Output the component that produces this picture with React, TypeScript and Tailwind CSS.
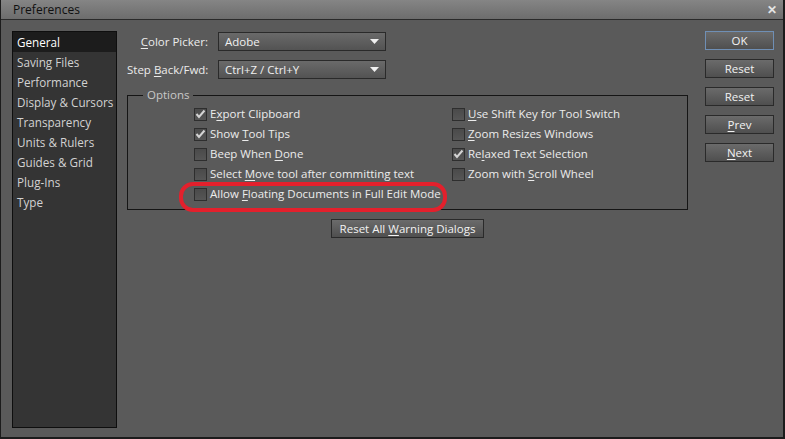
import React from "react";

const FONT = { fontFamily: '"Open Sans", "Noto Sans", "Liberation Sans", sans-serif' };

const CATEGORIES = [
  "General",
  "Saving Files",
  "Performance",
  "Display & Cursors",
  "Transparency",
  "Units & Rulers",
  "Guides & Grid",
  "Plug-Ins",
  "Type",
];

type Opt = { pre: string; key: string; post: string; checked: boolean };

const LEFT_OPTS: Opt[] = [
  { pre: "E", key: "x", post: "port Clipboard", checked: true },
  { pre: "Show ", key: "T", post: "ool Tips", checked: true },
  { pre: "Beep When ", key: "D", post: "one", checked: false },
  { pre: "Select ", key: "M", post: "ove tool after committing text", checked: false },
  { pre: "Allow ", key: "F", post: "loating Documents in Full Edit Mode", checked: false },
];

const RIGHT_OPTS: Opt[] = [
  { pre: "", key: "U", post: "se Shift Key for Tool Switch", checked: false },
  { pre: "", key: "Z", post: "oom Resizes Windows", checked: false },
  { pre: "Re", key: "l", post: "axed Text Selection", checked: true },
  { pre: "Zoom with ", key: "S", post: "croll Wheel", checked: false },
];

function Checkbox({ checked }: { checked: boolean }) {
  return (
    <div className="w-[13px] h-[13px] border border-[#2e2e2e] bg-gradient-to-b from-[#4a4a4a] to-[#565656] flex items-center justify-center shrink-0">
      {checked && (
        <svg width="11" height="10" viewBox="0 0 11 10">
          <path d="M1.5 5 L4 8 L9.5 1.5" fill="none" stroke="#d4d4d4" strokeWidth="2" />
        </svg>
      )}
    </div>
  );
}

function OptionRow({ opt }: { opt: Opt }) {
  return (
    <div className="h-5 flex items-center gap-[3px]">
      <Checkbox checked={opt.checked} />
      <span className="text-[11.5px] text-[#ececec] whitespace-nowrap">
        {opt.pre}
        <u className="underline-offset-2">{opt.key}</u>
        {opt.post}
      </span>
    </div>
  );
}

function Dropdown({ value }: { value: string }) {
  return (
    <div className="w-[168px] h-[19px] border border-[#2a2a2a] bg-gradient-to-b from-[#6a6a6a] to-[#535353] flex items-center pl-[6px] pr-[6px] text-[11.5px] text-[#f0f0f0]">
      <span className="flex-1">{value}</span>
      <svg width="9" height="6" viewBox="0 0 9 6">
        <path d="M0 0 H9 L4.5 5 Z" fill="#f0f0f0" />
      </svg>
    </div>
  );
}

function Button({ children, focused = false, className = "" }: { children: React.ReactNode; focused?: boolean; className?: string }) {
  return (
    <div
      className={`h-[19px] flex items-center justify-center text-[11.5px] text-[#f2f2f2] bg-gradient-to-b from-[#6b6b6b] to-[#4f4f4f] border ${
        focused ? "border-[#6f8fb5]" : "border-[#2a2a2a]"
      } ${className}`}
    >
      {children}
    </div>
  );
}

export default function App() {
  return (
    <div style={FONT} className="w-[785px] h-[439px] bg-[#5a5a5a] flex flex-col border-r-2 border-b-2 border-l border-[#1c1c1c] overflow-hidden">
      {/* title bar */}
      <div className="h-[20px] shrink-0 bg-gradient-to-b from-[#858585] to-[#6d6d6d] border-b border-[#2a2a2a] flex items-center pl-3 pr-[6px]">
        <span className="flex-1 text-[12px] text-[#101010] pt-[1px]">Preferences</span>
        <span className="text-[12px] font-bold text-[#e4e4e4] leading-none">✕</span>
      </div>

      <div className="flex flex-1 pt-[11px] pl-[11px] pb-[9px]">
        {/* category list */}
        <div className="w-[105px] bg-[#343434] border border-[#0e0e0e] flex flex-col">
          {CATEGORIES.map((c, i) => (
            <div
              key={c}
              className={`h-5 flex items-center pl-[4px] pt-[1px] text-[11.7px] whitespace-nowrap ${
                i === 0 ? "bg-[#1c1c1c] text-white" : "text-[#d2d2d2]"
              }`}
            >
              {c}
            </div>
          ))}
        </div>

        {/* main content */}
        <div className="ml-[10px] w-[561px] flex flex-col">
          <div className="flex items-center h-[19px] mt-[1px]">
            <div className="w-[81px] text-right text-[11.5px] text-[#ececec] whitespace-nowrap">
              <u className="underline-offset-2">C</u>olor Picker:
            </div>
            <div className="ml-[10px]">
              <Dropdown value="Adobe" />
            </div>
          </div>
          <div className="flex items-center h-[19px] mt-[9px]">
            <div className="w-[81px] text-right text-[11.5px] text-[#ececec] whitespace-nowrap">
              Step <u className="underline-offset-2">B</u>ack/Fwd:
            </div>
            <div className="ml-[10px]">
              <Dropdown value="Ctrl+Z / Ctrl+Y" />
            </div>
          </div>

          <fieldset className="mt-[9px] border border-[#151515] h-[122px] px-0 pt-[2px] relative">
            <legend className="ml-[15px] px-[4px] text-[11.5px] text-[#c8c8c8] leading-[14px]">Options</legend>
            <div className="flex pl-[66px]">
              <div className="w-[258px] flex flex-col">
                {LEFT_OPTS.map((o) => (
                  <OptionRow key={o.key + o.post} opt={o} />
                ))}
              </div>
              <div className="flex flex-col">
                {RIGHT_OPTS.map((o) => (
                  <OptionRow key={o.key + o.post} opt={o} />
                ))}
              </div>
            </div>
            {/* red annotation */}
            <div className="absolute left-[51px] top-[80px] w-[268px] h-[30px] border-[4px] border-[#e3202c] rounded-[14px]" />
          </fieldset>

          <div className="flex justify-center mt-[9px]">
            <Button className="w-[153px]">
              <span>
                Reset All <u className="underline-offset-2">W</u>arning Dialogs
              </span>
            </Button>
          </div>
        </div>

        {/* right buttons */}
        <div className="ml-[17px] w-[69px] flex flex-col gap-[9px]">
          <Button focused>OK</Button>
          <Button>Reset</Button>
          <Button>Reset</Button>
          <Button>
            <span>
              <u className="underline-offset-2">P</u>rev
            </span>
          </Button>
          <Button>
            <span>
              <u className="underline-offset-2">N</u>ext
            </span>
          </Button>
        </div>
      </div>
    </div>
  );
}
